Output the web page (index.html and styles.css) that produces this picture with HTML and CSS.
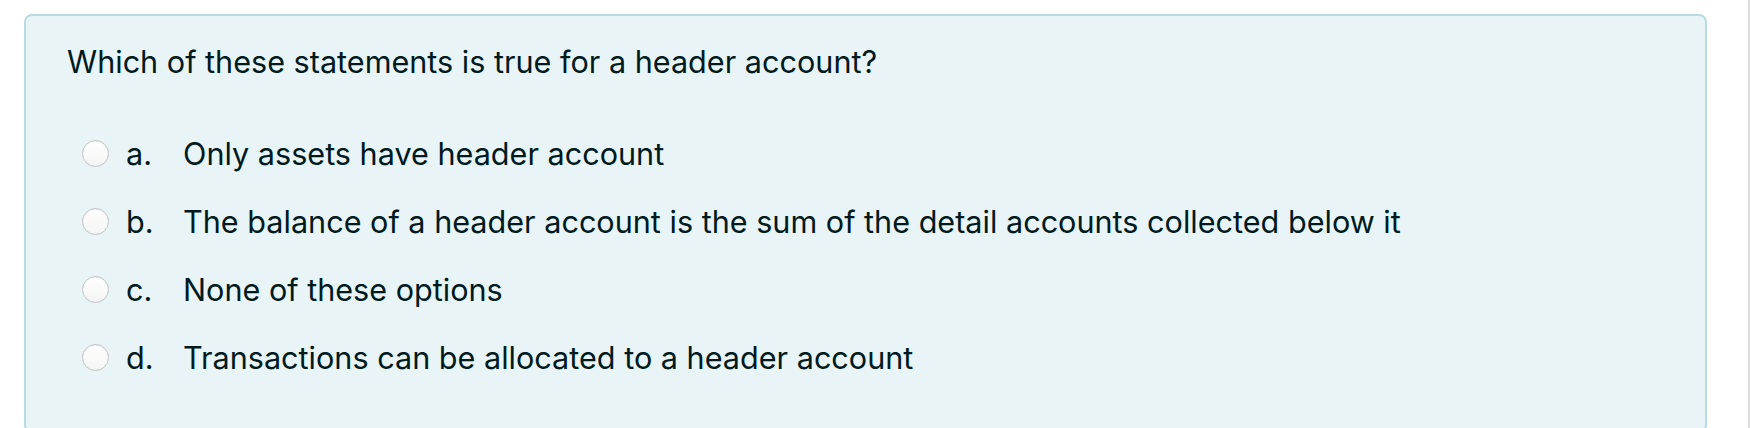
FILE: index.html
```html
<!DOCTYPE html>
<html>
<head>
<meta charset="utf-8">
<link rel="stylesheet" href="styles.css">
</head>
<body>
<div class="page">
  <div class="que">
    <div class="qtext">Which of these statements is true for a header account?</div>
    <div class="answers">
      <div class="opt"><span class="radio"></span><span class="letter">a.</span><span class="text">Only assets have header account</span></div>
      <div class="opt"><span class="radio"></span><span class="letter">b.</span><span class="text">The balance of a header account is the sum of the detail accounts collected below it</span></div>
      <div class="opt"><span class="radio"></span><span class="letter">c.</span><span class="text">None of these options</span></div>
      <div class="opt"><span class="radio"></span><span class="letter">d.</span><span class="text">Transactions can be allocated to a header account</span></div>
    </div>
  </div>
</div>
</body>
</html>
```
FILE: styles.css
```css
html, body {
  margin: 0;
  padding: 0;
  background: #ffffff;
  overflow: hidden;
}
.page {
  width: 1750px;
  height: 428px;
  box-sizing: border-box;
  border-right: 2px solid #dcdcdc;
  padding: 14px 0 0 24px;
  font-family: Inter, "Noto Sans", sans-serif;
  color: #001a1e;
  overflow: hidden;
}
.que {
  width: 1683px;
  box-sizing: border-box;
  background: #e8f4f6;
  border: 2px solid #b8dce2;
  border-radius: 8px;
  padding: 26px 41px 40px;
}
.qtext {
  font-size: 30.6px;
  line-height: 40px;
}
.answers {
  margin-top: 37px;
  padding-left: 15px;
}
.opt {
  display: grid;
  grid-template-columns: 27px 40px auto;
  column-gap: 17px;
  align-items: center;
  height: 68px;
  font-size: 30.6px;
}
.radio {
  width: 27px;
  height: 27px;
  box-sizing: border-box;
  border-radius: 50%;
  border: 1px solid #c4c4c4;
  background: linear-gradient(#ffffff, #f4f4f4);
  box-shadow: inset 0 1px 1px rgba(0,0,0,0.06);
}
```
